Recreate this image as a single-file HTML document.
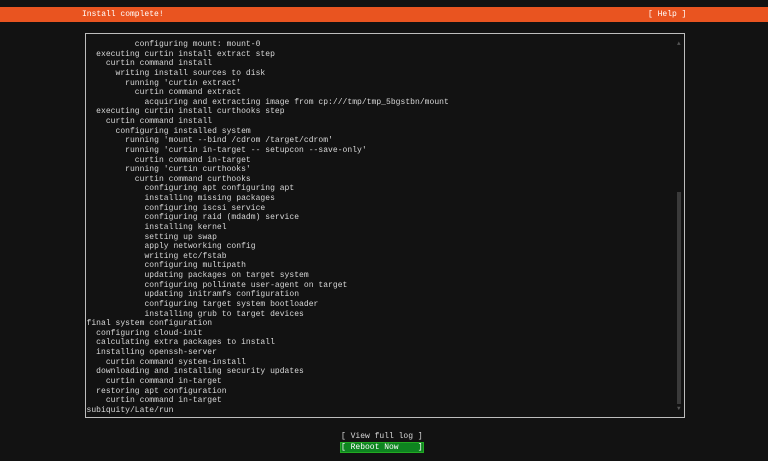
<!DOCTYPE html>
<html><head><meta charset="utf-8"><style>
html,body{margin:0;padding:0;background:#121212;width:768px;height:461px;overflow:hidden;font-family:"Liberation Mono",monospace;color:#d6d6d6;}
.bar{position:absolute;left:0;top:7px;width:768px;height:15px;background:#e95420;color:#fff;font-size:8px;line-height:15px;}
.bar .t{position:absolute;left:82px;}
.bar .h{position:absolute;left:648px;}
.box{position:absolute;left:85px;top:33px;width:598px;height:383px;border:1px solid #bdbdbd;}
pre{position:absolute;left:86.5px;top:40px;margin:0;font-family:"Liberation Mono",monospace;font-size:8px;line-height:9.63px;color:#d8d8d8;letter-spacing:0.03px;}
.thumb{position:absolute;left:677px;top:192px;width:4px;height:212px;background:#3a3a3a;}
.arr{position:absolute;left:677px;font-size:6px;color:#555;}
.b1{position:absolute;left:341px;top:432px;font-size:8px;line-height:9.6px;color:#d8d8d8;white-space:pre;}
.b2{position:absolute;left:340px;top:442px;width:82px;height:9px;background:#0e8420;border:0.5px solid #2a2;font-size:8px;line-height:9px;color:#fff;white-space:pre;overflow:hidden;}
</style></head><body>
<div class="bar"><span class="t">Install complete!</span><span class="h">[ Help ]</span></div>
<div class="box"></div>
<div class="thumb"></div>
<div class="arr" style="top:40px">▲</div>
<div class="arr" style="top:405px">▼</div>
<pre>          configuring mount: mount-0
  executing curtin install extract step
    curtin command install
      writing install sources to disk
        running 'curtin extract'
          curtin command extract
            acquiring and extracting image from cp:///tmp/tmp_5bgstbn/mount
  executing curtin install curthooks step
    curtin command install
      configuring installed system
        running 'mount --bind /cdrom /target/cdrom'
        running 'curtin in-target -- setupcon --save-only'
          curtin command in-target
        running 'curtin curthooks'
          curtin command curthooks
            configuring apt configuring apt
            installing missing packages
            configuring iscsi service
            configuring raid (mdadm) service
            installing kernel
            setting up swap
            apply networking config
            writing etc/fstab
            configuring multipath
            updating packages on target system
            configuring pollinate user-agent on target
            updating initramfs configuration
            configuring target system bootloader
            installing grub to target devices
final system configuration
  configuring cloud-init
  calculating extra packages to install
  installing openssh-server
    curtin command system-install
  downloading and installing security updates
    curtin command in-target
  restoring apt configuration
    curtin command in-target
subiquity/Late/run</pre>
<div class="b1">[ View full log ]</div>
<div class="b2">[ Reboot Now    ]</div>
</body></html>
